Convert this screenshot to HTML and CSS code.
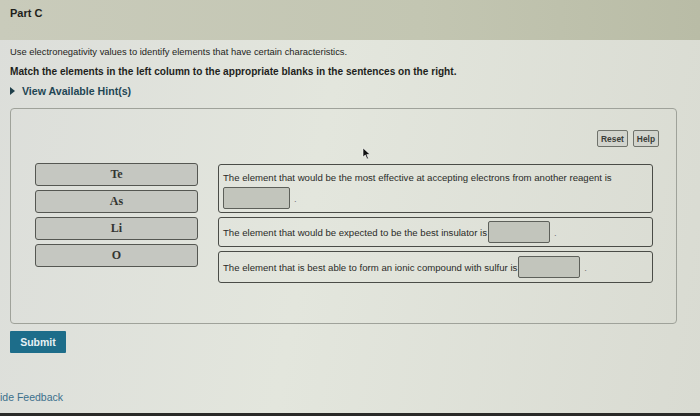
FILE: index.html
```html
<!DOCTYPE html>
<html lang="en">
<head>
  <meta charset="UTF-8">
  <meta name="viewport" content="width=device-width, initial-scale=1.0">
  <title>Part C</title>
  <link rel="stylesheet" href="styles.css">
</head>
<body>
  <div class="part-header">Part C</div>

  <div class="intro">
    <p class="prompt">Use electronegativity values to identify elements that have certain characteristics.</p>
    <p class="instruction">Match the elements in the left column to the appropriate blanks in the sentences on the right.</p>
    <div class="hint"><span class="caret"></span>View Available Hint(s)</div>
  </div>

  <div class="workspace">
    <div class="toolbar">
      <button class="tool-btn">Reset</button>
      <button class="tool-btn">Help</button>
    </div>

    <div class="board">
      <div class="tiles">
        <div class="tile">Te</div>
        <div class="tile">As</div>
        <div class="tile">Li</div>
        <div class="tile">O</div>
      </div>

      <div class="sentences">
        <div class="sentence tall">
          <div>The element that would be the most effective at accepting electrons from another reagent is</div>
          <div class="line"><span class="blank"></span><span class="dot">.</span></div>
        </div>
        <div class="sentence">
          The element that would be expected to be the best insulator is <span class="blank"></span><span class="dot">.</span>
        </div>
        <div class="sentence low">
          The element that is best able to form an ionic compound with sulfur is <span class="blank"></span><span class="dot">.</span>
        </div>
      </div>
    </div>

    <svg class="cursor" width="9" height="13" viewBox="0 0 9 13">
      <path d="M1 1 L1 10 L3.3 8 L5 12 L6.4 11.4 L4.8 7.6 L8 7.4 Z" fill="#111" stroke="#fff" stroke-width="0.6"/>
    </svg>
  </div>

  <button class="submit">Submit</button>

  <div class="feedback">ide Feedback</div>
  <div class="bezel"></div>
</body>
</html>
```

FILE: styles.css
```css
* {
  box-sizing: border-box;
}

body {
  margin: 0;
  width: 700px;
  height: 416px;
  overflow: hidden;
  font-family: "Liberation Sans", Arial, sans-serif;
  color: #1e1f1c;
  background: linear-gradient(100deg, #dcdeda 0%, #e3e6dd 45%, #d9dbd2 100%);
  position: relative;
}

.part-header {
  height: 40px;
  padding: 7px 10px 0;
  font-size: 11px;
  font-weight: bold;
  background: linear-gradient(90deg, #c9cbbb 0%, #c3c6b2 60%, #b9bca6 100%);
}

.intro {
  padding: 0 10px;
}

.intro p {
  margin: 0;
}

.prompt {
  padding-top: 6px;
  font-size: 9.4px;
}

.instruction {
  font-weight: bold;
  font-size: 10.1px;
  padding-top: 9px;
}

.hint {
  display: flex;
  align-items: center;
  padding-top: 8px;
  font-size: 10.6px;
  font-weight: bold;
  color: #1f4654;
}

.caret {
  width: 0;
  height: 0;
  border-top: 4px solid transparent;
  border-bottom: 4px solid transparent;
  border-left: 5px solid #1f3f4a;
  margin-right: 7px;
}

.workspace {
  position: relative;
  margin: 11px 23px 0 10px;
  height: 216px;
  border: 1px solid #9fa29a;
  border-radius: 4px;
}

.toolbar {
  display: flex;
  justify-content: flex-end;
  gap: 5px;
  padding: 21px 17px 0 0;
}

.tool-btn {
  height: 17px;
  padding: 0 3px;
  font-family: "Liberation Sans", Arial, sans-serif;
  font-size: 8.4px;
  font-weight: bold;
  color: #3a3c38;
  background: #d2d4cd;
  border: 1px solid #6f726b;
  border-radius: 2px;
}

.board {
  display: flex;
  align-items: flex-start;
  padding: 16px 0 0 24px;
}

.tiles {
  display: flex;
  flex-direction: column;
  gap: 4px;
  width: 163px;
}

.tile {
  height: 23px;
  padding-top: 3px;
  text-align: center;
  font-family: "Liberation Serif", "Times New Roman", serif;
  font-size: 12px;
  font-weight: bold;
  color: #343532;
  background: #c5c7c1;
  border: 1.5px solid #555752;
  border-radius: 3px;
}

.sentences {
  display: flex;
  flex-direction: column;
  gap: 4px;
  width: 435px;
  margin: 1px 0 0 20px;
}

.sentence {
  display: flex;
  align-items: center;
  padding: 0 4px;
  height: 30px;
  font-size: 9.6px;
  color: #2a2b28;
  border: 1.5px solid #4a4c47;
  border-radius: 3px;
}

.sentence.low {
  height: 32px;
}

.sentence.tall {
  display: block;
  height: 49px;
  padding-top: 7px;
}

.line {
  display: flex;
  align-items: center;
  margin-top: 4px;
}

.blank {
  display: inline-block;
  width: 62px;
  height: 22px;
  margin-left: 1px;
  background: #c2c5bc;
  border: 1.5px solid #5d605a;
  border-radius: 2px;
}

.tall .blank {
  width: 67px;
  margin-left: 0;
}

.dot {
  margin-left: 4px;
  color: #777;
}

.cursor {
  position: absolute;
  left: 351px;
  top: 38px;
}

.submit {
  display: block;
  margin: 7px 0 0 10px;
  width: 56px;
  height: 22px;
  font-family: "Liberation Sans", Arial, sans-serif;
  font-size: 10.5px;
  font-weight: bold;
  color: #e8f1f4;
  background: #1d6d8a;
  border: 0;
  border-radius: 1px;
}

.feedback {
  margin-top: 38px;
  font-size: 10.5px;
  color: #3b6f8c;
}

.bezel {
  position: absolute;
  left: 0;
  right: 0;
  bottom: 0;
  height: 3px;
  background: #2a2a28;
}
```
